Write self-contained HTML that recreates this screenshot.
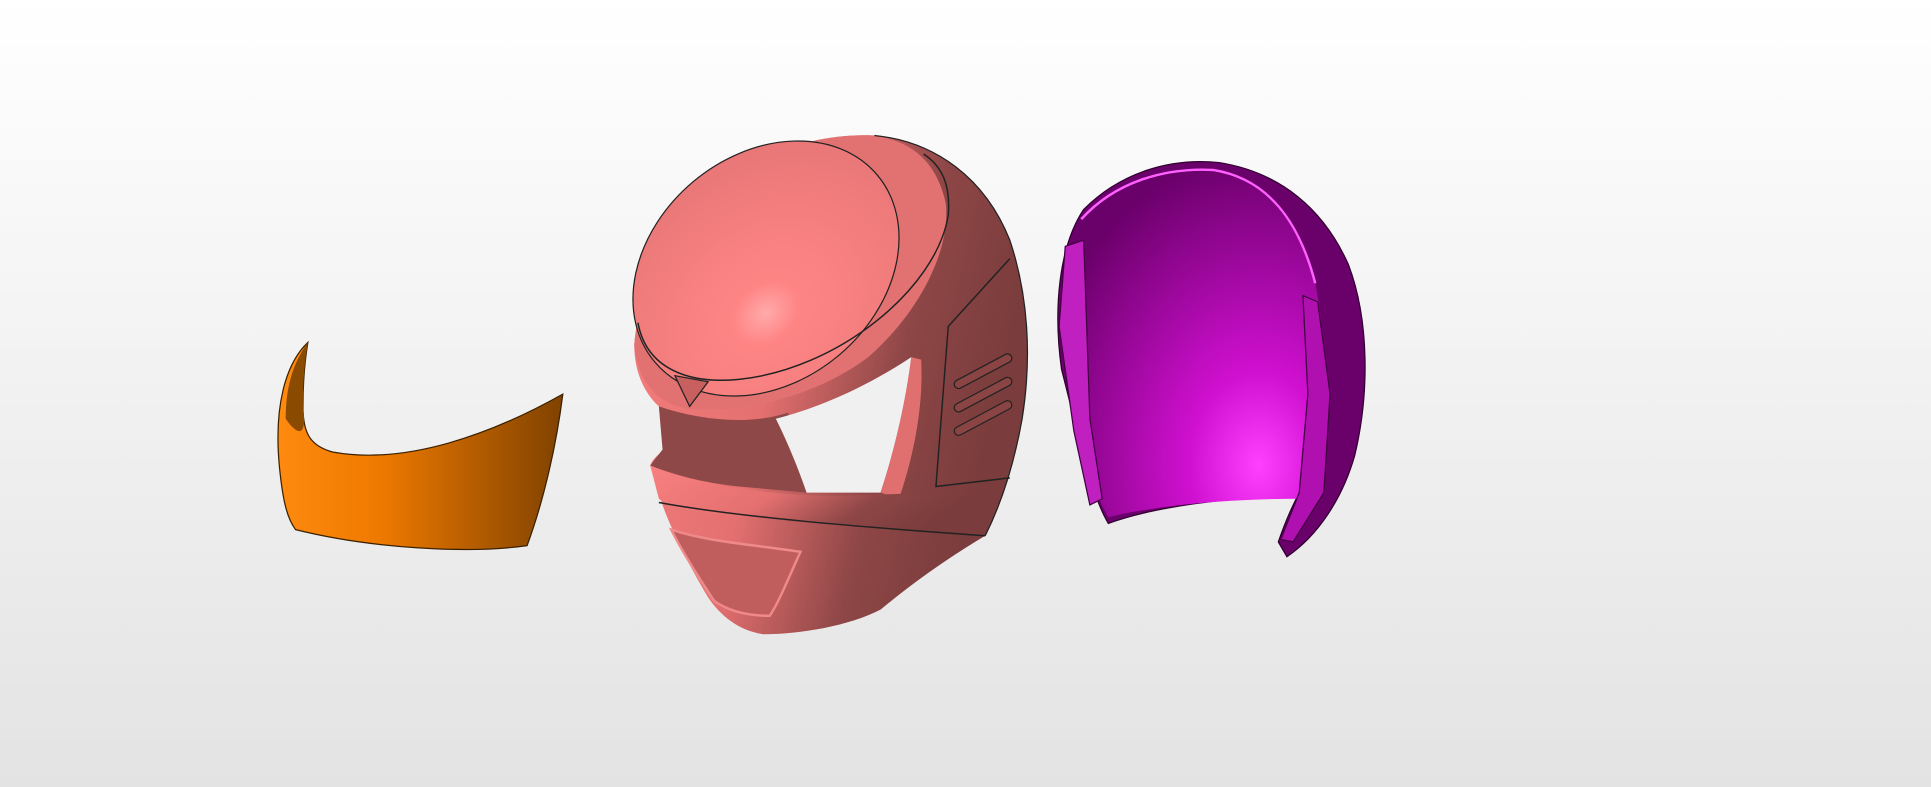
<!DOCTYPE html>
<html><head><meta charset="utf-8"><style>
html,body{margin:0;padding:0;width:1931px;height:787px;overflow:hidden}
svg{display:block}
</style></head><body>
<svg width="1931" height="787" viewBox="0 0 1568 639" preserveAspectRatio="none" xmlns="http://www.w3.org/2000/svg">
<defs>
<linearGradient id="bg" x1="0" y1="0" x2="0" y2="1"><stop offset="0" stop-color="#ffffff"/><stop offset="1" stop-color="#e3e3e3"/></linearGradient>
<linearGradient id="or" x1="0" y1="0" x2="1" y2="0"><stop offset="0" stop-color="#ff8a10"/><stop offset="0.35" stop-color="#f07a00"/><stop offset="1" stop-color="#7f4200"/></linearGradient>
<linearGradient id="pk" x1="0" y1="0" x2="1" y2="0.3"><stop offset="0" stop-color="#f88080"/><stop offset="0.45" stop-color="#e47070"/><stop offset="0.75" stop-color="#8e4646"/><stop offset="1" stop-color="#7a3c3c"/></linearGradient>
<radialGradient id="dome" cx="0.4" cy="0.65" r="0.8"><stop offset="0" stop-color="#ffaaaa"/><stop offset="0.15" stop-color="#ff8585"/><stop offset="1" stop-color="#e47474"/></radialGradient>
<radialGradient id="pu" cx="0.75" cy="0.85" r="0.9"><stop offset="0" stop-color="#ff40ff"/><stop offset="0.3" stop-color="#d010d0"/><stop offset="1" stop-color="#6a006a"/></radialGradient>
</defs>
<rect width="1568" height="639" fill="url(#bg)"/>
<path d="M250,278 C232,295 222,330 227,380 C230,410 234,422 240,430 C300,445 380,450 428,443 C442,405 452,360 457,320 C400,352 330,378 270,367 C252,362 246,352 246,330 C246,305 248,290 250,278 Z" fill="url(#or)" stroke="#3a2000" stroke-width="1"/>
<path d="M250,278 C240,292 232,310 232,340 C240,352 250,358 246,330 C246,305 248,290 250,278Z" fill="#8a4a00"/>
<path d="M710,110 C760,115 800,145 820,195 C835,240 838,290 830,340 C822,385 810,415 800,435 C775,450 745,470 715,495 C690,508 650,515 620,515 C600,512 585,500 575,485 C560,460 545,430 538,410 L528,378 C530,372 536,368 540,365 L535,330 C522,318 515,300 515,280 C518,240 540,195 580,155 C620,122 665,108 710,110 Z" fill="url(#pk)"/>
<path d="M515,280 C518,240 540,195 580,155 C620,122 665,108 710,110 C740,115 760,130 768,165 C772,205 745,255 705,290 C665,320 610,335 560,332 C535,328 518,312 515,280Z" fill="#e27272"/>
<ellipse cx="622" cy="218" rx="118" ry="92" transform="rotate(-40 622 218)" fill="url(#dome)" stroke="#222" stroke-width="1"/>
<path d="M518,262 C525,300 560,312 600,308 C680,300 760,235 770,175 C772,150 765,135 750,125" fill="none" stroke="#222" stroke-width="1.2"/>
<path d="M548,305 L560,330 L575,310 Z" fill="#c86060" stroke="#222" stroke-width="1"/>
<path d="M535,330 C570,342 610,345 640,335 C645,365 650,385 655,400 L600,395 C570,392 545,385 528,378 L538,365 Z" fill="#8e4848"/>
<path d="M630,340 C670,330 710,310 740,290 C735,330 725,370 715,400 C695,400 670,400 655,400 C648,380 640,360 630,340Z" fill="#f0f0f0"/>
<path d="M740,290 C735,330 725,370 715,400 L730,405 C742,370 750,330 748,292Z" fill="#e07070"/>
<path d="M528,378 C570,395 640,405 700,402 L760,400 L800,398 L800,435 C740,430 650,425 580,418 C555,414 540,410 535,405 Z" fill="url(#pk)"/>
<path d="M535,408 C600,420 700,428 800,435" fill="none" stroke="#222" stroke-width="1.2"/>
<path d="M545,430 C575,440 610,442 650,448 C640,470 632,490 625,500 C605,500 590,495 580,488 C568,470 555,450 545,430Z" fill="#c05e5e" stroke="#f08a8a" stroke-width="2"/>
<path d="M770,265 L820,210 M770,265 L760,395 L820,388" fill="none" stroke="#222" stroke-width="1.2"/>
<g fill="#8a4444" stroke="#222" stroke-width="1"><rect x="772" y="298" width="52" height="7" rx="3.5" transform="rotate(-28 798 301)"/><rect x="772" y="317" width="52" height="7" rx="3.5" transform="rotate(-28 798 320)"/><rect x="772" y="336" width="52" height="7" rx="3.5" transform="rotate(-28 798 339)"/></g>
<path d="M710,110 C760,115 800,145 820,195 C835,240 838,290 830,340 C822,385 810,415 800,435" fill="none" stroke="#222" stroke-width="1"/>
<path d="M880,170 C910,140 950,128 990,132 C1040,140 1075,170 1095,215 C1112,260 1112,320 1100,370 C1090,405 1070,435 1045,452 L1038,440 C1045,420 1050,410 1055,400 C1000,405 940,410 900,425 C885,400 875,350 862,300 C855,250 860,200 880,170Z" fill="#6a006a" stroke="#300030" stroke-width="1"/>
<path d="M878,178 C905,148 945,136 985,138 C1030,145 1055,180 1068,230 C1080,290 1075,360 1055,405 C1000,405 940,410 900,420 C885,395 875,350 868,300 C862,250 865,205 878,178Z" fill="url(#pu)"/>
<path d="M878,178 C905,148 945,136 985,138 C1030,145 1055,180 1068,230" fill="none" stroke="#ff60ff" stroke-width="2"/>
<path d="M865,200 L880,195 L885,340 L895,405 L885,410 L872,350 L860,265Z" fill="#c020c0" stroke="#400040" stroke-width="1"/>
<path d="M1058,240 L1070,245 L1080,320 L1075,400 L1050,440 L1040,438 L1055,400 L1062,320Z" fill="#b010b0" stroke="#400040" stroke-width="1"/>
</svg>
</body></html>
